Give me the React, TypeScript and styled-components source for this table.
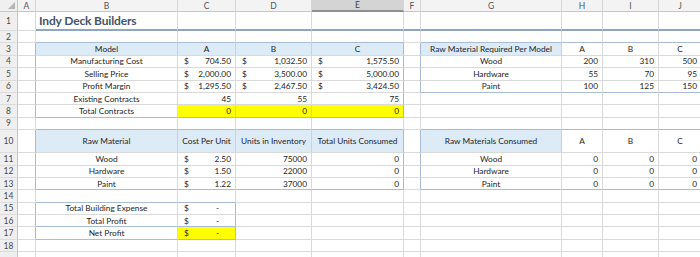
import React from 'react';
import styled, { createGlobalStyle } from 'styled-components';

const GlobalStyle = createGlobalStyle`
  html, body {
    margin: 0;
    padding: 0;
    background: #ffffff;
    overflow: hidden;
  }
  body {
    font-family: 'Lato', 'Open Sans', 'Liberation Sans', sans-serif;
  }
`;

type Align = 'left' | 'center' | 'right';
type Fill = 'blue' | 'yellow';

interface CellSpec {
  text?: string;
  align?: Align;
  money?: string;
  dash?: boolean;
  fill?: Fill;
}

const GRID = '#dadada';
const EDGE = '#a9bcd6';
const HEADING = '#8fa6c3';

// row header + A..J, J runs a little past the window edge
const COL_WIDTHS = [18, 18, 142, 58, 76, 92, 17, 141, 41, 56, 43];
const LETTERS = ['A', 'B', 'C', 'D', 'E', 'F', 'G', 'H', 'I', 'J'];
const ROW_HEIGHTS = [19, 12.4, 12.4, 12.4, 12.4, 12.4, 12.4, 12.4, 12.4, 23, 12.4, 12.4, 12.4, 12.4, 12.4, 12.4, 12.4, 12.4, 12.4];

const label = (text: string, fill?: Fill): CellSpec => ({ text, align: 'center', fill });
const num = (text: string, fill?: Fill): CellSpec => ({ text, align: 'right', fill });
const money = (amount: string): CellSpec => ({ money: amount });
const dash = (fill?: Fill): CellSpec => ({ dash: true, fill });

const CELLS: Record<string, CellSpec> = {
  B3: label('Model', 'blue'), C3: label('A', 'blue'), D3: label('B', 'blue'), E3: label('C', 'blue'),
  G3: label('Raw Material Required Per Model', 'blue'), H3: label('A'), I3: label('B'), J3: label('C'),

  B4: label('Manufacturing Cost'), C4: money('704.50'), D4: money('1,032.50'), E4: money('1,575.50'),
  G4: label('Wood'), H4: num('200'), I4: num('310'), J4: num('500'),

  B5: label('Selling Price'), C5: money('2,000.00'), D5: money('3,500.00'), E5: money('5,000.00'),
  G5: label('Hardware'), H5: num('55'), I5: num('70'), J5: num('95'),

  B6: label('Profit Margin'), C6: money('1,295.50'), D6: money('2,467.50'), E6: money('3,424.50'),
  G6: label('Paint'), H6: num('100'), I6: num('125'), J6: num('150'),

  B7: label('Existing Contracts'), C7: num('45'), D7: num('55'), E7: num('75'),
  B8: label('Total Contracts'), C8: num('0', 'yellow'), D8: num('0', 'yellow'), E8: num('0', 'yellow'),

  B10: label('Raw Material', 'blue'), C10: label('Cost Per Unit', 'blue'),
  D10: label('Units in Inventory', 'blue'), E10: label('Total Units Consumed', 'blue'),
  G10: label('Raw Materials Consumed', 'blue'), H10: label('A'), I10: label('B'), J10: label('C'),

  B11: label('Wood'), C11: money('2.50'), D11: num('75000'), E11: num('0'),
  G11: label('Wood'), H11: num('0'), I11: num('0'), J11: num('0'),
  B12: label('Hardware'), C12: money('1.50'), D12: num('22000'), E12: num('0'),
  G12: label('Hardware'), H12: num('0'), I12: num('0'), J12: num('0'),
  B13: label('Paint'), C13: money('1.22'), D13: num('37000'), E13: num('0'),
  G13: label('Paint'), H13: num('0'), I13: num('0'), J13: num('0'),

  B15: label('Total Building Expense'), C15: dash(),
  B16: label('Total Profit'), C16: dash(),
  B17: label('Net Profit'), C17: dash('yellow'),
};

// table outlines: rows whose bottom edge is drawn in the table colour
const LINES_BELOW: [string, number[]][] = [
  ['BCDE', [2, 8, 9, 13]],
  ['GHIJ', [2, 6, 9, 13]],
  ['BC', [14, 16, 17]],
];

const LINES_RIGHT: [string, number[]][] = [
  ['A', [3, 4, 5, 6, 7, 8, 10, 11, 12, 13, 15, 16, 17]],
  ['E', [3, 4, 5, 6, 7, 8, 10, 11, 12, 13]],
  ['F', [3, 4, 5, 6, 10, 11, 12, 13]],
  ['C', [15, 16, 17]],
];

const hasLine = (rules: [string, number[]][], col: string, row: number) =>
  rules.some(([cols, rows]) => cols.includes(col) && rows.includes(row));

const Sheet = styled.div`
  display: grid;
  grid-template-columns: ${COL_WIDTHS.map(w => `${w}px`).join(' ')};
  grid-template-rows: 12px ${ROW_HEIGHTS.map(h => `${h}px`).join(' ')};
  width: 700px;
  height: 257px;
  overflow: hidden;
  background: #ffffff;
`;

const Corner = styled.div`
  box-sizing: border-box;
  display: flex;
  align-items: flex-end;
  justify-content: flex-end;
  padding: 0 2px 2px 0;
  background: #f0f0f0;
  border-right: 1px solid #c6c6c6;
  border-bottom: 1px solid #c6c6c6;
`;

const ColHead = styled.div<{ $active?: boolean }>`
  box-sizing: border-box;
  display: flex;
  align-items: center;
  justify-content: center;
  font-size: 8.5px;
  color: ${p => (p.$active ? '#3f3f3f' : '#555555')};
  background: ${p => (p.$active ? '#d4d4d4' : '#f3f3f3')};
  border-right: 1px solid #d6d6d6;
  border-bottom: ${p => (p.$active ? '2px solid #8e8e8e' : '1px solid #c6c6c6')};
`;

const RowHead = styled.div`
  box-sizing: border-box;
  display: flex;
  align-items: center;
  justify-content: center;
  font-size: 8.5px;
  color: #4a4a4a;
  background: #efefef;
  border-right: 1px solid #c6c6c6;
  border-bottom: 1px solid #dcdcdc;
`;

const Cell = styled.div<{ $align: Align; $fill?: Fill; $below?: 'table' | 'heading'; $right?: boolean }>`
  box-sizing: border-box;
  min-width: 0;
  display: flex;
  align-items: center;
  justify-content: ${p => (p.$align === 'center' ? 'center' : p.$align === 'right' ? 'flex-end' : 'flex-start')};
  padding: 0 4px;
  font-size: 8.3px;
  color: #1e1e1e;
  white-space: nowrap;
  background: ${p => (p.$fill === 'blue' ? '#ddebf7' : p.$fill === 'yellow' ? '#ffff00' : '#ffffff')};
  border-right: 1px solid ${p => (p.$right ? EDGE : p.$fill ? 'rgba(120, 140, 160, 0.25)' : GRID)};
  border-bottom: ${p =>
    p.$below === 'heading' ? `2px solid ${HEADING}` : `1px solid ${p.$below === 'table' ? EDGE : GRID}`};
`;

const TitleCell = styled(Cell)`
  padding-left: 3px;
  font-size: 12px;
  font-weight: 700;
  letter-spacing: -0.15px;
  color: #44546a;
  overflow: visible;
`;

const Money = styled.span`
  flex: 1;
  display: flex;
  justify-content: space-between;
  padding-left: 2px;
`;

const Dash = styled.span`
  padding-right: 12px;
`;

const CornerMark = () => (
  <svg width="7" height="7" viewBox="0 0 7 7">
    <polygon points="7,0 7,7 0,7" fill="#b5b5b5" />
  </svg>
);

const renderContent = (spec?: CellSpec) => {
  if (!spec) return null;
  if (spec.money !== undefined) {
    return (
      <Money>
        <span>$</span>
        <span>{spec.money}</span>
      </Money>
    );
  }
  if (spec.dash) {
    return (
      <Money>
        <span>$</span>
        <Dash>-</Dash>
      </Money>
    );
  }
  return spec.text;
};

const App: React.FC = () => {
  const rows = ROW_HEIGHTS.map((_, i) => i + 1);

  return (
    <>
      <GlobalStyle />
      <Sheet>
        <Corner>
          <CornerMark />
        </Corner>
        {LETTERS.map(l => (
          <ColHead key={l} $active={l === 'E'}>{l}</ColHead>
        ))}

        {rows.map(row => (
          <React.Fragment key={row}>
            {/* the last row only peeks in under the window edge */}
            <RowHead>{row < rows.length ? row : null}</RowHead>
            {LETTERS.map(col => {
              const key = `${col}${row}`;
              const right = hasLine(LINES_RIGHT, col, row);
              if (row === 1) {
                const heading = col !== 'A' ? 'heading' : undefined;
                return col === 'B' ? (
                  <TitleCell key={key} $align="left" $below="heading">Indy Deck Builders</TitleCell>
                ) : (
                  <Cell key={key} $align="left" $below={heading} />
                );
              }
              const spec = CELLS[key];
              return (
                <Cell
                  key={key}
                  $align={spec?.align ?? 'left'}
                  $fill={spec?.fill}
                  $below={hasLine(LINES_BELOW, col, row) ? 'table' : undefined}
                  $right={right}
                >
                  {renderContent(spec)}
                </Cell>
              );
            })}
          </React.Fragment>
        ))}
      </Sheet>
    </>
  );
};

export default App;
